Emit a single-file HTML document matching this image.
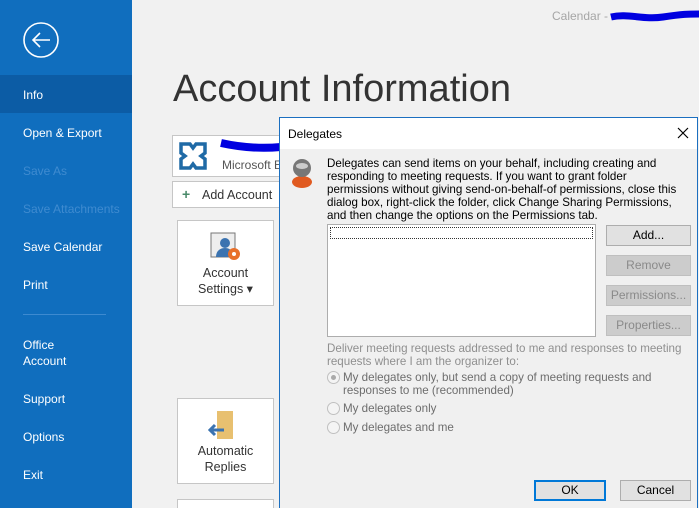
<!DOCTYPE html>
<html><head><meta charset="utf-8"><style>
*{margin:0;padding:0;box-sizing:border-box}
html,body{width:699px;height:508px;overflow:hidden}
body{background:#f1f1f1;font-family:"Liberation Sans",sans-serif;position:relative}
.side{position:absolute;left:0;top:0;width:132px;height:508px;background:#106ebe}
.side .it{position:absolute;left:23px;color:#fff;font-size:12px;line-height:16px;white-space:nowrap}
.side .dis{color:#3f8bd0}
.sel{position:absolute;left:0;top:75px;width:132px;height:38px;background:#0c5ca5}
.abs{position:absolute}
.card{position:absolute;background:#fff;border:1px solid #c6c6c6}
.dlg{position:absolute;left:279px;top:117px;width:419px;height:395px;background:#f0f0f0;border:1px solid #1b6fc0}
.dlg .t{position:absolute;left:0;top:0;width:100%;height:31px;background:#fff;font-size:12px;padding:9px 0 0 8px;color:#000}
.btn{position:absolute;left:326px;width:85px;height:21px;border:1px solid #adadad;background:#e1e1e1;font-size:12px;text-align:center;line-height:19px;color:#000}
.btn.d{background:#cccccc;border-color:#bfbfbf;color:#8a8a8a}
.txt{font-size:11.6px;line-height:13px;color:#000;white-space:nowrap}
.g{color:#8f8f8f}
.rad{position:absolute;width:13px;height:13px;border-radius:50%;border:1px solid #c0c0c0;background:#f4f4f4}
</style></head><body>
<div class="side">
 <svg class="abs" style="left:22px;top:21px" width="38" height="38"><circle cx="19" cy="19" r="17" fill="none" stroke="#fff" stroke-width="1.6"/><path d="M11 19H28M18 12L11 19L18 26" fill="none" stroke="#fff" stroke-width="1.6"/></svg>
 <div class="sel"></div>
 <div class="it" style="top:87px">Info</div>
 <div class="it" style="top:125px">Open &amp; Export</div>
 <div class="it dis" style="top:163px">Save As</div>
 <div class="it dis" style="top:201px">Save Attachments</div>
 <div class="it" style="top:239px">Save Calendar</div>
 <div class="it" style="top:277px">Print</div>
 <span class="abs" style="left:23px;top:314px;width:83px;height:1px;background:#3d8ad0"></span>
 <div class="it" style="top:337px">Office<br>Account</div>
 <div class="it" style="top:391px">Support</div>
 <div class="it" style="top:429px">Options</div>
 <div class="it" style="top:467px">Exit</div>
</div>
<div class="abs" style="left:552px;top:9px;font-size:12px;color:#a6a6a6">Calendar -</div>
<svg class="abs" style="left:608px;top:8px" width="91" height="16"><path d="M3 9C20 5 35 12 55 9S80 6 91 6" stroke="#0000e0" stroke-width="7" fill="none"/></svg>
<div class="abs" style="left:173px;top:68px;font-size:38px;color:#333;font-weight:300">Account Information</div>
<div class="card" style="left:172px;top:135px;width:110px;height:42px;overflow:hidden">
 <svg class="abs" style="left:5px;top:5px" width="30" height="30"><path d="M3 3h9l3 4 3-4h9v9l-4 3 4 3v9h-9l-3-4-3 4H3v-9l4-3-4-3z" fill="none" stroke="#1f6aa6" stroke-width="3.5"/></svg>
 <div class="abs" style="left:49px;top:22px;font-size:12px;color:#555;white-space:nowrap">Microsoft E</div>
</div>
<svg class="abs" style="left:219px;top:135px" width="62" height="20"><path d="M2 8C20 12 40 14 62 12" stroke="#0000e0" stroke-width="8" fill="none"/></svg>
<div class="card" style="left:172px;top:181px;width:110px;height:27px">
 <div class="abs" style="left:9px;top:4px;color:#4a8a6a;font-size:14px;font-weight:bold">+</div>
 <div class="abs" style="left:29px;top:6px;font-size:12.5px;color:#333;white-space:nowrap">Add Account</div>
</div>
<div class="card" style="left:177px;top:220px;width:97px;height:86px">
 <svg class="abs" style="left:32px;top:11px" width="34" height="32"><rect x="1" y="1" width="24" height="24" fill="#eee" stroke="#777"/><circle cx="15" cy="11" r="5" fill="#3b73b0"/><path d="M6 25c0-6 4-9 9-9s8 3 8 9z" fill="#3b73b0"/><circle cx="24" cy="22" r="6" fill="#e8702a"/><circle cx="24" cy="22" r="2" fill="#fff"/></svg>
 <div class="abs" style="left:0;width:95px;text-align:center;top:44px;font-size:12.5px;color:#333;line-height:16px">Account<br>Settings ▾</div>
</div>
<div class="card" style="left:177px;top:398px;width:97px;height:86px">
 <svg class="abs" style="left:30px;top:12px" width="30" height="30"><rect x="9" y="0" width="16" height="28" fill="#e8c070"/><path d="M2 19H16M7 14L2 19L7 24" stroke="#3b73b0" stroke-width="3" fill="none"/></svg>
 <div class="abs" style="left:0;width:95px;text-align:center;top:44px;font-size:12.5px;color:#333;line-height:16px">Automatic<br>Replies</div>
</div>
<div class="card" style="left:177px;top:499px;width:97px;height:20px"></div>

<div class="dlg">
 <div class="t">Delegates</div>
 <svg class="abs" style="left:397px;top:9px" width="12" height="12"><path d="M1 1L11 11M11 1L1 11" stroke="#000" stroke-width="1.2"/></svg>
 <svg class="abs" style="left:10px;top:38px" width="24" height="32"><ellipse cx="12" cy="26" rx="10" ry="6" fill="#e05a20"/><circle cx="12" cy="12" r="9" fill="#777"/><ellipse cx="12" cy="10" rx="6" ry="3" fill="#ccc"/></svg>
 <div class="abs txt" style="left:47px;top:39px">Delegates can send items on your behalf, including creating and<br>responding to meeting requests. If you want to grant folder<br>permissions without giving send-on-behalf-of permissions, close this<br>dialog box, right-click the folder, click Change Sharing Permissions,<br>and then change the options on the Permissions tab.</div>
 <div class="abs" style="left:47px;top:106px;width:269px;height:113px;background:#fff;border:1px solid #adadad"><div style="margin:2px;height:12px;border:1px dotted #333"></div></div>
 <div class="btn" style="top:107px">Add...</div>
 <div class="btn d" style="top:137px">Remove</div>
 <div class="btn d" style="top:167px">Permissions...</div>
 <div class="btn d" style="top:197px">Properties...</div>
 <div class="abs txt g" style="left:47px;top:224px">Deliver meeting requests addressed to me and responses to meeting<br>requests where I am the organizer to:</div>
 <div class="rad" style="left:47px;top:253px"><span style="position:absolute;left:3px;top:3px;width:5px;height:5px;border-radius:50%;background:#aaa"></span></div>
 <div class="abs txt" style="left:63px;top:253px;color:#6d6d6d">My delegates only, but send a copy of meeting requests and<br>responses to me (recommended)</div>
 <div class="rad" style="left:47px;top:284px"></div>
 <div class="abs txt" style="left:63px;top:284px;color:#6d6d6d">My delegates only</div>
 <div class="rad" style="left:47px;top:303px"></div>
 <div class="abs txt" style="left:63px;top:303px;color:#6d6d6d">My delegates and me</div>
 <div class="btn" style="left:254px;top:362px;width:72px;border:2px solid #0078d7;line-height:17px">OK</div>
 <div class="btn" style="left:340px;top:362px;width:71px">Cancel</div>
</div>
</body></html>
